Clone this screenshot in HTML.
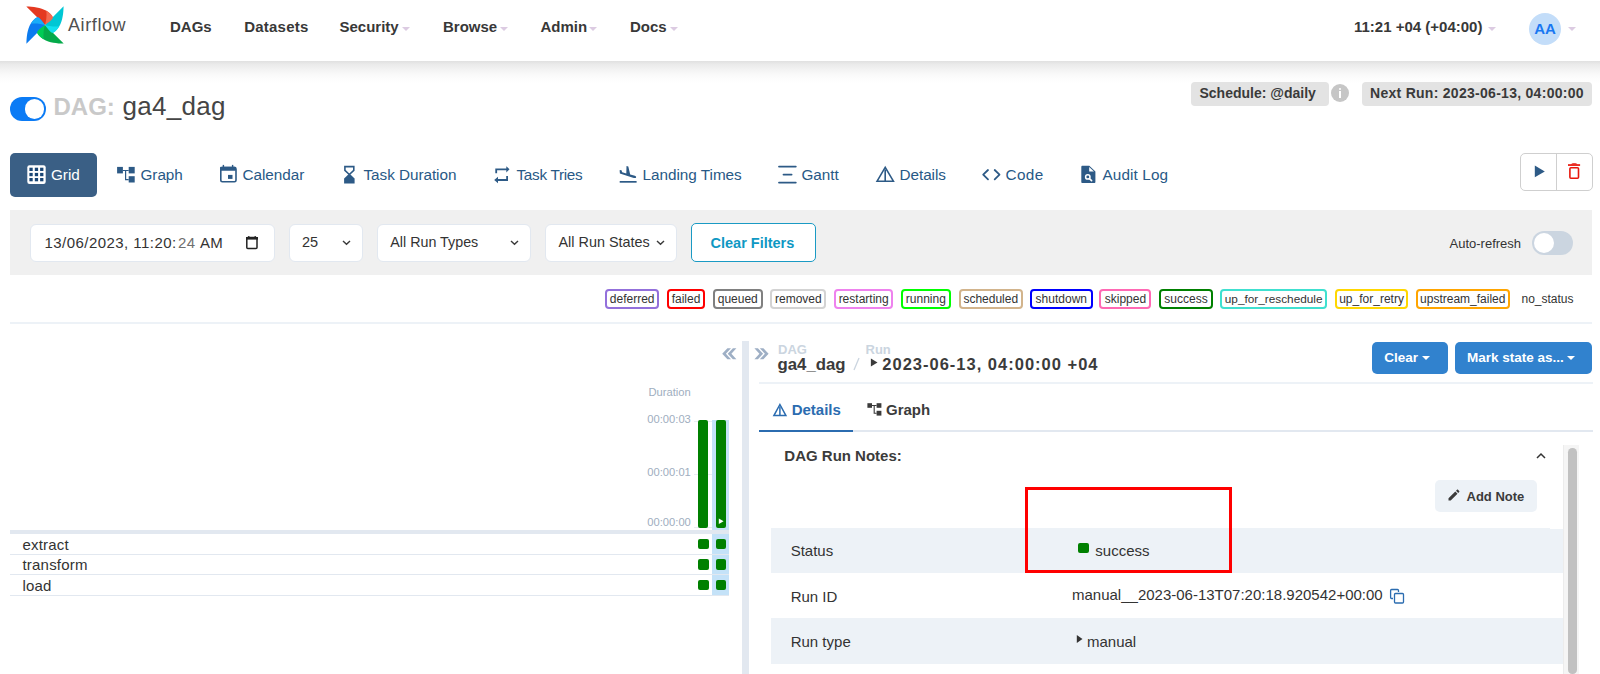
<!DOCTYPE html>
<html><head><meta charset="utf-8">
<style>
*{box-sizing:border-box;margin:0;padding:0}
html,body{width:1600px;height:674px;overflow:hidden;background:#fff;font-family:"Liberation Sans",sans-serif;color:#333}
.a{position:absolute;white-space:pre;line-height:1}
.nav{position:absolute;left:0;top:0;width:1600px;height:61px;background:#fff}
.navsh{position:absolute;left:0;top:61px;width:1600px;height:22px;background:linear-gradient(#e0e0e0,#eaeaea 15%,#f3f3f3 40%,#fafafa 65%,#fdfdfd 85%,#fff)}
.ni{font-size:15px;font-weight:700;color:#383838;top:19.3px}
.caret{position:absolute;width:0;height:0;border-left:4px solid transparent;border-right:4px solid transparent;border-top:4px solid #dccbe2}
.tab{font-size:15.3px;color:#285986;top:167.05px;letter-spacing:-0.05px}
.badge{position:absolute;background:#e3e3e3;border-radius:4px}
.bt{font-size:14.5px;font-weight:700;color:#3a3a3a}
.sel{position:absolute;background:#fff;border:1px solid #e2e8f0;border-radius:6px}
.lg{position:absolute;top:288.5px;height:20px;border:2px solid;border-radius:4px;font-size:12px;color:#333;line-height:16px;text-align:center}
</style></head><body>

<!-- NAVBAR -->
<div class="navsh"></div>
<div class="nav"></div>
<svg class="a" style="left:25.2px;top:4.5px" width="40" height="40" viewBox="-20 -20 40 40">
 <path d="M0,0 L-18.7,-18.6 C-12,-18.4 -4.5,-17.8 1.5,-14.2 C5,-11.8 7.8,-9 7.8,-7.2 C7.8,-5.6 3,-2.2 0,0Z" fill="#e43921" transform="rotate(0)"/>
 <path d="M0,0 L-18.7,-18.6 C-12,-18.4 -4.5,-17.8 1.5,-14.2 C5,-11.8 7.8,-9 7.8,-7.2 C7.8,-5.6 3,-2.2 0,0Z" fill="#00c7d4" transform="rotate(90)"/>
 <path d="M0,0 L-18.7,-18.6 C-12,-18.4 -4.5,-17.8 1.5,-14.2 C5,-11.8 7.8,-9 7.8,-7.2 C7.8,-5.6 3,-2.2 0,0Z" fill="#04aa4a" transform="rotate(180)"/>
 <path d="M0,0 L-18.7,-18.6 C-12,-18.4 -4.5,-17.8 1.5,-14.2 C5,-11.8 7.8,-9 7.8,-7.2 C7.8,-5.6 3,-2.2 0,0Z" fill="#0b7bef" transform="rotate(270)"/>
 <path d="M0,0 C1.2,-3.5 1.8,-8.5 1.4,-14.2 C4.8,-12 7.8,-9.2 7.8,-7.2 C7.8,-5.6 3,-2.2 0,0Z" fill="#f46a50" transform="rotate(0)"/>
 <path d="M0,0 C1.2,-3.5 1.8,-8.5 1.4,-14.2 C4.8,-12 7.8,-9.2 7.8,-7.2 C7.8,-5.6 3,-2.2 0,0Z" fill="#11e0ef" transform="rotate(90)"/>
 <path d="M0,0 C1.2,-3.5 1.8,-8.5 1.4,-14.2 C4.8,-12 7.8,-9.2 7.8,-7.2 C7.8,-5.6 3,-2.2 0,0Z" fill="#00cc55" transform="rotate(180)"/>
 <path d="M0,0 C1.2,-3.5 1.8,-8.5 1.4,-14.2 C4.8,-12 7.8,-9.2 7.8,-7.2 C7.8,-5.6 3,-2.2 0,0Z" fill="#19adf8" transform="rotate(270)"/>
</svg>
<div class="a" style="left:68px;top:15.7px;font-size:18px;color:#505050;letter-spacing:0.6px">Airflow</div>

<div class="a ni" style="left:170px">DAGs</div>
<div class="a ni" style="left:244.3px;letter-spacing:0.2px">Datasets</div>
<div class="a ni" style="left:339.5px">Security</div><div class="caret" style="left:401.5px;top:27px"></div>
<div class="a ni" style="left:443px">Browse</div><div class="caret" style="left:499.5px;top:27px"></div>
<div class="a ni" style="left:540.5px">Admin</div><div class="caret" style="left:589px;top:27px"></div>
<div class="a ni" style="left:630px">Docs</div><div class="caret" style="left:669.5px;top:27px"></div>

<div class="a ni" style="left:1354px">11:21 +04 (+04:00)</div><div class="caret" style="left:1488px;top:27px"></div>
<div class="a" style="left:1529px;top:12.5px;width:32px;height:32px;border-radius:50%;background:#c3ddf9"></div>
<div class="a" style="left:1529px;top:20.8px;width:32px;text-align:center;font-size:15px;font-weight:700;color:#1877f2">AA</div>
<div class="caret" style="left:1568px;top:27px"></div>

<!-- TITLE -->
<div class="a" style="left:9.8px;top:97px;width:36.3px;height:24px;border-radius:12px;background:#0b7bf5"></div>
<div class="a" style="left:24.5px;top:98.8px;width:19.8px;height:20px;border-radius:50%;background:#fff"></div>
<div class="a" style="left:53.5px;top:94.7px;font-size:24px;font-weight:700;color:#c9c9c9">DAG:</div>
<div class="a" style="left:122.5px;top:93px;font-size:26px;color:#454545;letter-spacing:0.3px">ga4_dag</div>

<div class="badge" style="left:1191px;top:82px;width:138px;height:24px"></div>
<div class="a bt" style="left:1199.5px;top:86.4px;font-size:14px">Schedule: @daily</div>
<div class="a" style="left:1331px;top:84px;width:18px;height:18px;border-radius:50%;background:#c6c6c6"></div>
<div class="a" style="left:1338.8px;top:87.6px;width:2.4px;height:2.4px;background:#fff;border-radius:1px"></div>
<div class="a" style="left:1338.8px;top:91.2px;width:2.4px;height:6.6px;background:#fff"></div>
<div class="badge" style="left:1362px;top:82px;width:230px;height:24px"></div>
<div class="a bt" style="left:1370px;top:86.4px;font-size:14px;letter-spacing:0.28px">Next Run: 2023-06-13, 04:00:00</div>


<!-- TABS -->
<div class="a" style="left:10px;top:153px;width:86.5px;height:44px;border-radius:5px;background:#3a5f85"></div>
<svg class="a" style="left:27px;top:165px" width="19" height="19" viewBox="0 0 19 19">
 <rect x="0.3" y="0.3" width="18.4" height="18.6" rx="2.2" fill="#fff"/>
 <g fill="#1a4675">
  <rect x="2.4" y="2.7" width="3.3" height="3.3"/><rect x="7.8" y="2.7" width="3.3" height="3.3"/><rect x="13.1" y="2.7" width="3.3" height="3.3"/>
  <rect x="2.4" y="7.9" width="3.3" height="3.3"/><rect x="7.8" y="7.9" width="3.3" height="3.3"/><rect x="13.1" y="7.9" width="3.3" height="3.3"/>
  <rect x="2.4" y="13" width="3.3" height="3.3"/><rect x="7.8" y="13" width="3.3" height="3.3"/><rect x="13.1" y="13" width="3.3" height="3.3"/>
 </g>
</svg>
<div class="a tab" style="left:51px;color:#fff">Grid</div>

<svg class="a" style="left:110px;top:160px" width="30" height="30" viewBox="0 0 30 30" fill="#2d5a86">
 <rect x="7.1" y="6.9" width="5.8" height="6.5"/><rect x="18.7" y="6.9" width="6" height="6.5"/><rect x="18.7" y="16.2" width="6" height="6.3"/>
 <path d="M12.9 10.5H18.7M15.6 10.5V19.6H18.7" stroke="#2d5a86" stroke-width="1.2" fill="none"/>
</svg>
<div class="a tab" style="left:140.5px">Graph</div>

<svg class="a" style="left:214px;top:160px" width="30" height="30" viewBox="0 0 30 30">
 <rect x="6.8" y="7.5" width="15.2" height="14.2" rx="1.5" fill="none" stroke="#2d5a86" stroke-width="1.6"/>
 <rect x="6" y="6.7" width="16" height="4" fill="#2d5a86" rx="1"/>
 <rect x="8.7" y="4.9" width="1.4" height="2.5" fill="#2d5a86"/><rect x="17.9" y="4.9" width="1.4" height="2.5" fill="#2d5a86"/>
 <rect x="14" y="14.9" width="4.5" height="4" fill="#2d5a86"/>
</svg>
<div class="a tab" style="left:242.5px">Calendar</div>

<svg class="a" style="left:335px;top:160px" width="30" height="30" viewBox="0 0 30 30">
 <path d="M9.9 6.6H18.8V10.4L14.35 14.5L9.9 10.4Z" fill="none" stroke="#2d5a86" stroke-width="1.6" stroke-linejoin="miter"/>
 <path d="M9.1 18.5L14.35 13.6L19.6 18.5V23.6H9.1Z" fill="#2d5a86"/>
</svg>
<div class="a tab" style="left:363.5px">Task Duration</div>

<svg class="a" style="left:488px;top:160px" width="30" height="30" viewBox="0 0 30 30">
 <path d="M8.2 13.2V9.3H19" fill="none" stroke="#2d5a86" stroke-width="1.8"/>
 <path d="M18.3 6.2L21.5 9.3L18.3 12.5Z" fill="#2d5a86"/>
 <path d="M19.1 16V20H10" fill="none" stroke="#2d5a86" stroke-width="1.8"/>
 <path d="M10 16.7L6.2 20L10 23.3Z" fill="#2d5a86"/>
</svg>
<div class="a tab" style="left:516.5px;letter-spacing:-0.3px">Task Tries</div>

<svg class="a" style="left:613px;top:160px" width="30" height="30" viewBox="0 0 30 30">
 <path d="M6.6 10.3L8.3 10.1L9.2 12.3L13.3 13.4L13.5 6L15.3 6.4L17.2 14.5L21.9 15.8C23.3 16.3 23.5 17.5 22.7 17.9C22 18.2 21 18 20 17.7L6.9 13.6Z" fill="#2d5a86"/>
 <rect x="6.7" y="21" width="16.9" height="1.7" fill="#2d5a86"/>
</svg>
<div class="a tab" style="left:642.5px;letter-spacing:-0.02px">Landing Times</div>

<svg class="a" style="left:772px;top:160px" width="30" height="30" viewBox="0 0 30 30" stroke="#2d5a86" stroke-width="1.8" stroke-linecap="round">
 <path d="M7 6.6H23.8M11.5 14.6H19.6M7 22.6H23.8"/>
</svg>
<div class="a tab" style="left:801.5px">Gantt</div>

<svg class="a" style="left:871px;top:160px" width="30" height="30" viewBox="0 0 30 30" fill="none" stroke="#2d5a86" stroke-width="1.6">
 <path d="M14.2 7.3L6.1 21.2H22.4Z" stroke-linejoin="miter"/><path d="M14.2 9.5V21.2"/>
</svg>
<div class="a tab" style="left:899.5px">Details</div>

<svg class="a" style="left:976px;top:160px" width="30" height="30" viewBox="0 0 30 30" fill="none" stroke="#2d5a86" stroke-width="1.8" stroke-linecap="round" stroke-linejoin="round">
 <path d="M12 10L7.2 14.6L12 19.3M18.7 10L23.5 14.6L18.7 19.3"/>
</svg>
<div class="a tab" style="left:1005.5px;letter-spacing:0.4px">Code</div>

<svg class="a" style="left:1074px;top:160px" width="30" height="30" viewBox="0 0 30 30">
 <path d="M8.4 5.8H15.3L21.4 11.6V22C21.4 22.7 20.9 23.1 20.3 23.1H8.4C7.8 23.1 7.3 22.7 7.3 22V6.9C7.3 6.3 7.8 5.8 8.4 5.8Z" fill="#2d5a86"/>
 <path d="M15.2 6.9V11.4H20Z" fill="#fff"/>
 <circle cx="13.8" cy="16.9" r="2.2" fill="none" stroke="#fff" stroke-width="1.5"/>
 <path d="M15.4 18.6L17.6 20.6" stroke="#fff" stroke-width="1.6" stroke-linecap="round"/>
</svg>
<div class="a tab" style="left:1102.5px;letter-spacing:0.12px">Audit Log</div>

<div class="a" style="left:1520px;top:153px;width:72.5px;height:37.5px;border:1.5px solid #cfcfcf;border-radius:5px"></div>
<div class="a" style="left:1555.5px;top:154px;width:1.5px;height:36px;background:#cfcfcf"></div>
<svg class="a" style="left:1530px;top:160px" width="20" height="24" viewBox="0 0 20 24"><path d="M4.8 5.6L14.8 11.4L4.8 17.3Z" fill="#2d5a86"/></svg>
<svg class="a" style="left:1564px;top:160px" width="20" height="24" viewBox="0 0 20 24">
 <path d="M4 5.05H16.1" stroke="#e8170c" stroke-width="1.7"/><path d="M6.8 4.5C7.4 3.5 8.4 3.2 10.2 3.2C12 3.2 13 3.5 13.6 4.5Z" fill="#e8170c"/>
 <rect x="5.9" y="7.7" width="8.6" height="10.5" rx="1" fill="none" stroke="#e8170c" stroke-width="1.6"/>
</svg>


<!-- FILTER BAR -->
<div class="a" style="left:10px;top:210px;width:1582px;height:65px;background:#f0f0f0"></div>
<div class="sel" style="left:29.5px;top:223.5px;width:245px;height:38px"></div>
<div class="a" style="left:44.5px;top:235.3px;font-size:15px;color:#333;letter-spacing:0.45px">13/06/2023, 11:20:</div>
<div class="a" style="left:178px;top:235.3px;font-size:15px;color:#6f6f6f;letter-spacing:0.45px">24</div>
<div class="a" style="left:200px;top:235.3px;font-size:15px;color:#333;letter-spacing:0.2px">AM</div>
<svg class="a" style="left:245px;top:235px" width="14" height="15" viewBox="0 0 14 15"><rect x="1.8" y="2.6" width="10.2" height="10.8" rx="1" fill="none" stroke="#222" stroke-width="1.5"/><rect x="1" y="2" width="12" height="2.6" fill="#222"/><rect x="3.2" y="1" width="1.2" height="2" fill="#222"/><rect x="9.6" y="1" width="1.2" height="2" fill="#222"/></svg>

<div class="sel" style="left:288.5px;top:223.5px;width:74px;height:38px"></div>
<div class="a" style="left:302px;top:235.3px;font-size:14.5px;color:#333">25</div>
<svg class="a" style="left:341.9px;top:240.2px" width="9" height="6" viewBox="0 0 9 6"><path d="M1 1L4.5 4.3L8 1" fill="none" stroke="#3a3a3a" stroke-width="1.4"/></svg>
<div class="sel" style="left:376.5px;top:223.5px;width:154px;height:38px"></div>
<div class="a" style="left:390.3px;top:235.3px;font-size:14.3px;color:#333">All Run Types</div>
<svg class="a" style="left:510.4px;top:240.2px" width="9" height="6" viewBox="0 0 9 6"><path d="M1 1L4.5 4.3L8 1" fill="none" stroke="#3a3a3a" stroke-width="1.4"/></svg>
<div class="sel" style="left:545px;top:223.5px;width:131.5px;height:38px"></div>
<div class="a" style="left:558.5px;top:235.3px;font-size:14.4px;color:#333">All Run States</div>
<svg class="a" style="left:656.4px;top:240.2px" width="9" height="6" viewBox="0 0 9 6"><path d="M1 1L4.5 4.3L8 1" fill="none" stroke="#3a3a3a" stroke-width="1.4"/></svg>
<div class="a" style="left:690.5px;top:223px;width:125px;height:38.5px;border:1.5px solid #1a9ac4;border-radius:5px;background:#fff"></div>
<div class="a" style="left:710.5px;top:235.5px;font-size:14.5px;font-weight:700;color:#0f98c3">Clear Filters</div>
<div class="a" style="left:1449.5px;top:236.8px;font-size:13px;color:#333">Auto-refresh</div>
<div class="a" style="left:1531.5px;top:230.5px;width:41.5px;height:24px;border-radius:12px;background:#cbd5e0"></div>
<div class="a" style="left:1533.5px;top:232.5px;width:20px;height:20px;border-radius:50%;background:#fff"></div>

<!-- LEGEND -->
<div class="lg" style="left:605px;width:54.3px;border-color:#9370db">deferred</div>
<div class="lg" style="left:667px;width:38.0px;border-color:#ff0000">failed</div>
<div class="lg" style="left:712.5px;width:50.5px;border-color:#808080">queued</div>
<div class="lg" style="left:770.3px;width:56.1px;border-color:#d3d3d3">removed</div>
<div class="lg" style="left:834px;width:59.3px;border-color:#ee82ee">restarting</div>
<div class="lg" style="left:900.8px;width:50.0px;border-color:#00ff00">running</div>
<div class="lg" style="left:958.5px;width:64.5px;border-color:#d2b48c">scheduled</div>
<div class="lg" style="left:1030px;width:62.6px;border-color:#0000ff">shutdown</div>
<div class="lg" style="left:1099.4px;width:52.1px;border-color:#ff69b4">skipped</div>
<div class="lg" style="left:1159.4px;width:53.2px;border-color:#008000">success</div>
<div class="lg" style="left:1220px;width:107.3px;border-color:#40e0d0;font-size:11.8px">up_for_reschedule</div>
<div class="lg" style="left:1334.8px;width:73.5px;border-color:#ffd700">up_for_retry</div>
<div class="lg" style="left:1415.5px;width:94.5px;border-color:#ffa500">upstream_failed</div>
<div class="a" style="left:1521.5px;top:292.8px;font-size:12px;color:#333">no_status</div>
<div class="a" style="left:10px;top:322px;width:1582px;height:2px;background:#edf2f7"></div>


<!-- GRID PANEL -->
<svg class="a" style="left:720px;top:345px" width="18" height="18" viewBox="0 0 18 18" fill="#9eafc5"><path d="M2.2 8.8L7.4 3.3H11L5.9 8.8L11 14.3H7.4Z"/><path d="M7.7 8.8L12.9 3.3H16.4L11.4 8.8L16.4 14.3H12.9Z"/></svg>
<div class="a" style="left:742px;top:341px;width:6.5px;height:333px;background:#e2e8f0"></div>
<div class="a" style="left:648.5px;top:387.49px;font-size:11.2px;color:#a0aec0">Duration</div>
<div class="a" style="left:647.3px;top:413.69px;font-size:11.2px;color:#a0aec0">00:00:03</div>
<div class="a" style="left:647.3px;top:467.09px;font-size:11.2px;color:#a0aec0">00:00:01</div>
<div class="a" style="left:647.3px;top:517.19px;font-size:11.2px;color:#a0aec0">00:00:00</div>
<div class="a" style="left:694px;top:420.5px;width:35px;height:1px;background:#e8edf3"></div>
<div class="a" style="left:694px;top:474px;width:35px;height:1px;background:#e8edf3"></div>
<div class="a" style="left:694px;top:527px;width:35px;height:1px;background:#e8edf3"></div>
<div class="a" style="left:712px;top:420px;width:17px;height:175.5px;background:#c4e2f8"></div>
<div class="a" style="left:698.2px;top:420px;width:10.3px;height:107.7px;border-radius:2px;background:#008000"></div>
<div class="a" style="left:715.7px;top:420px;width:10.3px;height:107.7px;border-radius:2px;background:#008000"></div>
<svg class="a" style="left:716px;top:515px" width="10" height="12" viewBox="0 0 10 12"><path d="M2.8 3.4L7.6 6.2L2.8 9Z" fill="#fff"/></svg>
<div class="a" style="left:10px;top:530px;width:719px;height:3.6px;background:#e2e8f0"></div>
<div class="a" style="left:10px;top:553.7px;width:719px;height:1px;background:#e2e8f0"></div>
<div class="a" style="left:10px;top:574.2px;width:719px;height:1px;background:#e2e8f0"></div>
<div class="a" style="left:10px;top:595px;width:719px;height:1px;background:#e2e8f0"></div>
<div class="a" style="left:698px;top:539px;width:10.5px;height:10.3px;border-radius:2px;background:#008000"></div>
<div class="a" style="left:715.5px;top:539px;width:10.5px;height:10.3px;border-radius:2px;background:#008000"></div>
<div class="a" style="left:698px;top:559.4px;width:10.5px;height:10.3px;border-radius:2px;background:#008000"></div>
<div class="a" style="left:715.5px;top:559.4px;width:10.5px;height:10.3px;border-radius:2px;background:#008000"></div>
<div class="a" style="left:698px;top:579.9px;width:10.5px;height:10.3px;border-radius:2px;background:#008000"></div>
<div class="a" style="left:715.5px;top:579.9px;width:10.5px;height:10.3px;border-radius:2px;background:#008000"></div>
<div class="a" style="left:22.5px;top:536.90px;font-size:15px;color:#333;letter-spacing:0.2px">extract</div>
<div class="a" style="left:22.5px;top:556.90px;font-size:15px;color:#333;letter-spacing:0.2px">transform</div>
<div class="a" style="left:22.5px;top:577.70px;font-size:15px;color:#333;letter-spacing:0.2px">load</div>

<!-- DETAILS PANEL -->
<svg class="a" style="left:753px;top:345px" width="18" height="18" viewBox="0 0 18 18" fill="#9eafc5"><path d="M15.6 8.8L10.4 3.3H6.8L11.9 8.8L6.8 14.3H10.4Z"/><path d="M10.1 8.8L4.9 3.3H1.4L6.4 8.8L1.4 14.3H4.9Z"/></svg>
<div class="a" style="left:778px;top:343.3px;font-size:13px;color:#cbd5e0;font-weight:700">DAG</div>
<div class="a" style="left:865.5px;top:343.3px;font-size:13px;color:#cbd5e0;font-weight:700">Run</div>
<div class="a" style="left:777.5px;top:356.7px;font-size:16.8px;color:#3b3b3b;font-weight:700">ga4_dag</div>
<svg class="a" style="left:852px;top:357px" width="9" height="14" viewBox="0 0 9 14"><path d="M7 1L2 13" stroke="#cbd5e0" stroke-width="1.3"/></svg>
<svg class="a" style="left:870px;top:358px" width="8" height="9" viewBox="0 0 8 9"><path d="M0.9 0.6L7.5 4.6L0.9 8.6Z" fill="#3b3b3b"/></svg>
<div class="a" style="left:882.3px;top:356.3px;font-size:16.5px;color:#3b3b3b;font-weight:700;letter-spacing:1px">2023-06-13, 04:00:00 +04</div>
<div class="a" style="left:1372px;top:342px;width:75.5px;height:32px;border-radius:5px;background:#3182ce"></div>
<div class="a" style="left:1454.5px;top:342px;width:137.5px;height:32px;border-radius:5px;background:#3182ce"></div>
<div class="a" style="left:1384.3px;top:350.67px;font-size:13.5px;color:#fff;font-weight:700">Clear</div>
<div class="a" style="left:1467px;top:350.67px;font-size:13.5px;color:#fff;font-weight:700">Mark state as...</div>
<div class="caret" style="left:1422px;top:356px;border-left-width:4px;border-right-width:4px;border-top:4.5px solid #fff"></div>
<div class="caret" style="left:1566.5px;top:356px;border-left-width:4px;border-right-width:4px;border-top:4.5px solid #fff"></div>
<div class="a" style="left:758.5px;top:382px;width:834px;height:1.5px;background:#edf2f7"></div>
<svg class="a" style="left:772px;top:402px" width="16" height="16" viewBox="0 0 16 16" fill="none" stroke="#2b6cb0" stroke-width="1.5"><path d="M7.9 2.5L1.9 13.6H13.9Z"/><path d="M7.9 4.5V13.6"/></svg>
<div class="a" style="left:791.7px;top:402.4px;font-size:15px;color:#2b6cb0;font-weight:700">Details</div>
<svg class="a" style="left:866px;top:402px" width="17" height="16" viewBox="0 0 17 16" fill="#3b3b3b">
 <rect x="1.4" y="1.2" width="4.6" height="4.6"/><rect x="10.6" y="1.2" width="4.8" height="4.6"/><rect x="10.6" y="8.8" width="4.8" height="4.8"/>
 <path d="M6 3.5H10.6M8.2 3.5V11.2H10.6" stroke="#3b3b3b" stroke-width="1.1" fill="none"/></svg>
<div class="a" style="left:886px;top:402.4px;font-size:15px;color:#3b3b3b;font-weight:700">Graph</div>
<div class="a" style="left:758.5px;top:430px;width:834px;height:2px;background:#e2e8f0"></div>
<div class="a" style="left:758.5px;top:429.5px;width:94.5px;height:2.5px;background:#2b6cb0"></div>
<div class="a" style="left:784.3px;top:448.20px;font-size:15px;color:#3b3b3b;font-weight:700">DAG Run Notes:</div>
<svg class="a" style="left:1533.5px;top:450px" width="14" height="12" viewBox="0 0 14 12"><path d="M3 8L7 4L11 8" fill="none" stroke="#333" stroke-width="1.5"/></svg>
<div class="a" style="left:1434.5px;top:480px;width:102.5px;height:31.5px;border-radius:5px;background:#edf2f7"></div>
<svg class="a" style="left:1447px;top:489px" width="13" height="13" viewBox="0 0 13 13"><path d="M1.5 11.5V9.3L8.3 2.5L10.5 4.7L3.7 11.5Z M9 1.8L10 0.8C10.3 0.5 10.7 0.5 11 0.8L12.2 2C12.5 2.3 12.5 2.7 12.2 3L11.2 4Z" fill="#3b3b3b"/></svg>
<div class="a" style="left:1466.5px;top:489.50px;font-size:13px;color:#3b3b3b;font-weight:700">Add Note</div>
<div class="a" style="left:771px;top:527.5px;width:779px;height:1px;background:#edf2f7"></div>
<div class="a" style="left:771.2px;top:528.5px;width:792px;height:44.5px;background:#edf2f7"></div>
<div class="a" style="left:771.2px;top:618px;width:792px;height:46.3px;background:#edf2f7"></div>
<div class="a" style="left:790.7px;top:542.90px;font-size:15px;color:#333">Status</div>
<div class="a" style="left:790.7px;top:588.60px;font-size:15px;color:#333">Run ID</div>
<div class="a" style="left:790.7px;top:634.10px;font-size:15px;color:#333">Run type</div>
<div class="a" style="left:1077.7px;top:543.3px;width:11px;height:9.8px;border-radius:2px;background:#008000"></div>
<div class="a" style="left:1095.3px;top:542.90px;font-size:15px;color:#333">success</div>
<div class="a" style="left:1072px;top:586.8px;font-size:15px;color:#333">manual__2023-06-13T07:20:18.920542+00:00</div>
<svg class="a" style="left:1388px;top:587px" width="18" height="18" viewBox="0 0 18 18" fill="none" stroke="#2b6cb0" stroke-width="1.3"><path d="M5 11.5H3.6C3 11.5 2.6 11.1 2.6 10.5V3.5C2.6 2.9 3 2.5 3.6 2.5H9.5C10.1 2.5 10.5 2.9 10.5 3.5V5"/><rect x="6.5" y="6.5" width="9" height="9.5" rx="1"/></svg>
<svg class="a" style="left:1076px;top:634px" width="8" height="10" viewBox="0 0 8 10"><path d="M0.8 1L6.5 5L0.8 9Z" fill="#333"/></svg>
<div class="a" style="left:1087px;top:634.10px;font-size:15px;color:#333">manual</div>
<div class="a" style="left:1024.9px;top:487.1px;width:207px;height:86.3px;border:3.4px solid #ff0000"></div>
<div class="a" style="left:1563.2px;top:444.5px;width:16.3px;height:230px;background:#f5f5f5;border-left:1px solid #ececec"></div>
<div class="a" style="left:1568px;top:448px;width:8.6px;height:226px;border-radius:4.3px;background:#c1c1c1"></div>

</body></html>
